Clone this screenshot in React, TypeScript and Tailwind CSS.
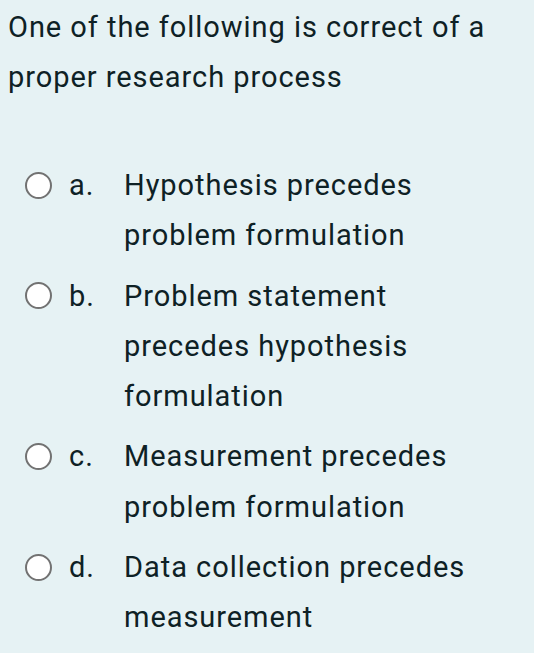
import React from "react";

const options = [
  { letter: "a.", text: "Hypothesis precedes problem formulation" },
  { letter: "b.", text: "Problem statement precedes hypothesis formulation" },
  { letter: "c.", text: "Measurement precedes problem formulation" },
  { letter: "d.", text: "Data collection precedes measurement" },
];

export default function App() {
  return (
    <div
      className="w-[534px] h-[653px] bg-[#e6f2f4] text-[#0e2125] overflow-hidden tracking-[0.95px]"
      style={{ fontFamily: "Roboto, 'Liberation Sans', sans-serif" }}
    >
      <div className="pl-[8px] pr-[10px] pt-[2px] text-[29px] leading-[50px]">
        One of the following is correct of a proper research process
      </div>
      <div className="mt-[58px] flex flex-col gap-[10px]">
        {options.map((o) => (
          <div key={o.letter} className="flex items-start text-[29px] leading-[50.3px]">
            <div className="w-[69px] shrink-0 h-[50px] flex items-center pl-[25px]">
              <div className="w-[27px] h-[27px] rounded-full border-2 border-[#727272] bg-white" />
            </div>
            <div className="w-[55px] shrink-0">{o.letter}</div>
            <div className="w-[380px]">{o.text}</div>
          </div>
        ))}
      </div>
    </div>
  );
}
